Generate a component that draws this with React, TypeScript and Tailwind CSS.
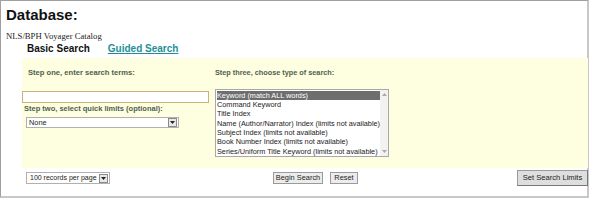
import React from "react";

const items = [
  "Keyword (match ALL words)",
  "Command Keyword",
  "Title Index",
  "Name (Author/Narrator) Index (limits not available)",
  "Subject Index (limits not available)",
  "Book Number Index (limits not available)",
  "Series/Uniform Title Keyword (limits not available)",
];

function Arrow() {
  return (
    <span className="flex h-[9px] w-[9px] shrink-0 items-center justify-center border border-[#8a8a8a] bg-[#e8e8e8]">
      <svg width="5" height="3" viewBox="0 0 5 3"><path d="M0 0h5L2.5 3z" fill="#222" /></svg>
    </span>
  );
}

export default function App() {
  return (
    <div className="h-[200px] w-[590px] bg-white font-['Liberation_Sans',Arial,sans-serif]">
      <div className="h-[198px] w-[589px] border border-[#a0a0a0] border-b-2 border-r-2 border-b-[#c8c8c8] border-r-[#c8c8c8] pl-[5px]">
        <div className="pt-[6px] text-[15px] font-bold leading-[16px] text-[#111]">Database:</div>
        <div className="mt-[8px] font-['Liberation_Serif',serif] text-[8.7px] leading-[10px] text-[#222]">NLS/BPH Voyager Catalog</div>
        <div className="ml-[21px] mt-[2px] flex h-[12px] items-center text-[10px] font-bold leading-[12px]">
          <span className="text-[#111]">Basic Search</span>
          <span className="ml-[18px] text-[#1f8f9a] underline">Guided Search</span>
        </div>
        <div className="ml-[16px] mr-[-1px] mt-[3px] flex h-[110px] bg-[#fefee0] pt-[10px]">
          <div className="flex w-[193px] flex-col pl-[6px]">
            <div className="whitespace-nowrap text-[7.6px] font-bold leading-[10px] text-[#4f5f4f]">Step one, enter search terms:</div>
            <div className="-ml-[6px] mt-[13px] h-[12px] w-[187px] border border-[#c8b478] bg-white" />
            <div className="-ml-[4px] mt-[1px] whitespace-nowrap text-[7.5px] font-bold leading-[10px] text-[#4f5f4f]">Step two, select quick limits (optional):</div>
            <div className="-ml-[2px] mt-[3px] flex h-[11px] w-[153px] items-center justify-between border border-[#b0b0b0] bg-white pl-[2px] pr-[1px] text-[7.4px] text-[#222]">
              <span>None</span>
              <Arrow />
            </div>
          </div>
          <div className="flex flex-col">
            <div className="whitespace-nowrap text-[7.3px] font-bold leading-[10px] text-[#4f5f4f]">Step three, choose type of search:</div>
            <div className="mt-[11px] flex h-[68px] w-[174px] border border-[#a8a8a8] bg-white">
              <div className="flex-1 pl-[1px] pt-[0.5px]">
                {items.map((t, i) => (
                  <div
                    key={t}
                    className={
                      i === 0
                        ? "h-[9.4px] whitespace-nowrap bg-[#6e6e6e] text-[7.3px] leading-[9.4px] text-white"
                        : "h-[9.4px] whitespace-nowrap text-[7.3px] leading-[9.4px] text-[#222]"
                    }
                  >
                    {t}
                  </div>
                ))}
              </div>
              <div className="flex w-[10px] flex-col items-center justify-between bg-[#f2f2f2] py-[3px]">
                <svg width="5" height="3" viewBox="0 0 5 3"><path d="M0 3h5L2.5 0z" fill="#aaa" /></svg>
                <svg width="5" height="3" viewBox="0 0 5 3"><path d="M0 0h5L2.5 3z" fill="#aaa" /></svg>
              </div>
            </div>
          </div>
        </div>
        <div className="ml-[20px] mr-[-1px] mt-[2px] flex items-center">
          <div className="flex h-[12px] w-[84px] items-center justify-between border border-[#b0b0b0] bg-white pl-[3px] pr-[1px] text-[7px] text-[#222]">
            <span className="whitespace-nowrap">100 records per page</span>
            <Arrow />
          </div>
          <button className="ml-[163px] h-[12px] w-[50px] whitespace-nowrap border border-[#9a9a9a] bg-[#ececec] p-0 text-[7.4px] leading-[10px] text-[#222]">Begin Search</button>
          <button className="ml-[7px] h-[12px] w-[28px] whitespace-nowrap border border-[#9a9a9a] bg-[#ececec] p-0 text-[7.4px] leading-[10px] text-[#222]">Reset</button>
          <button className="ml-auto h-[16px] w-[71px] whitespace-nowrap border border-[#9a9a9a] border-b-[#777] border-r-[#777] bg-[#dedede] p-0 text-[7.6px] leading-[14px] text-[#222]">Set Search Limits</button>
        </div>
      </div>
    </div>
  );
}
